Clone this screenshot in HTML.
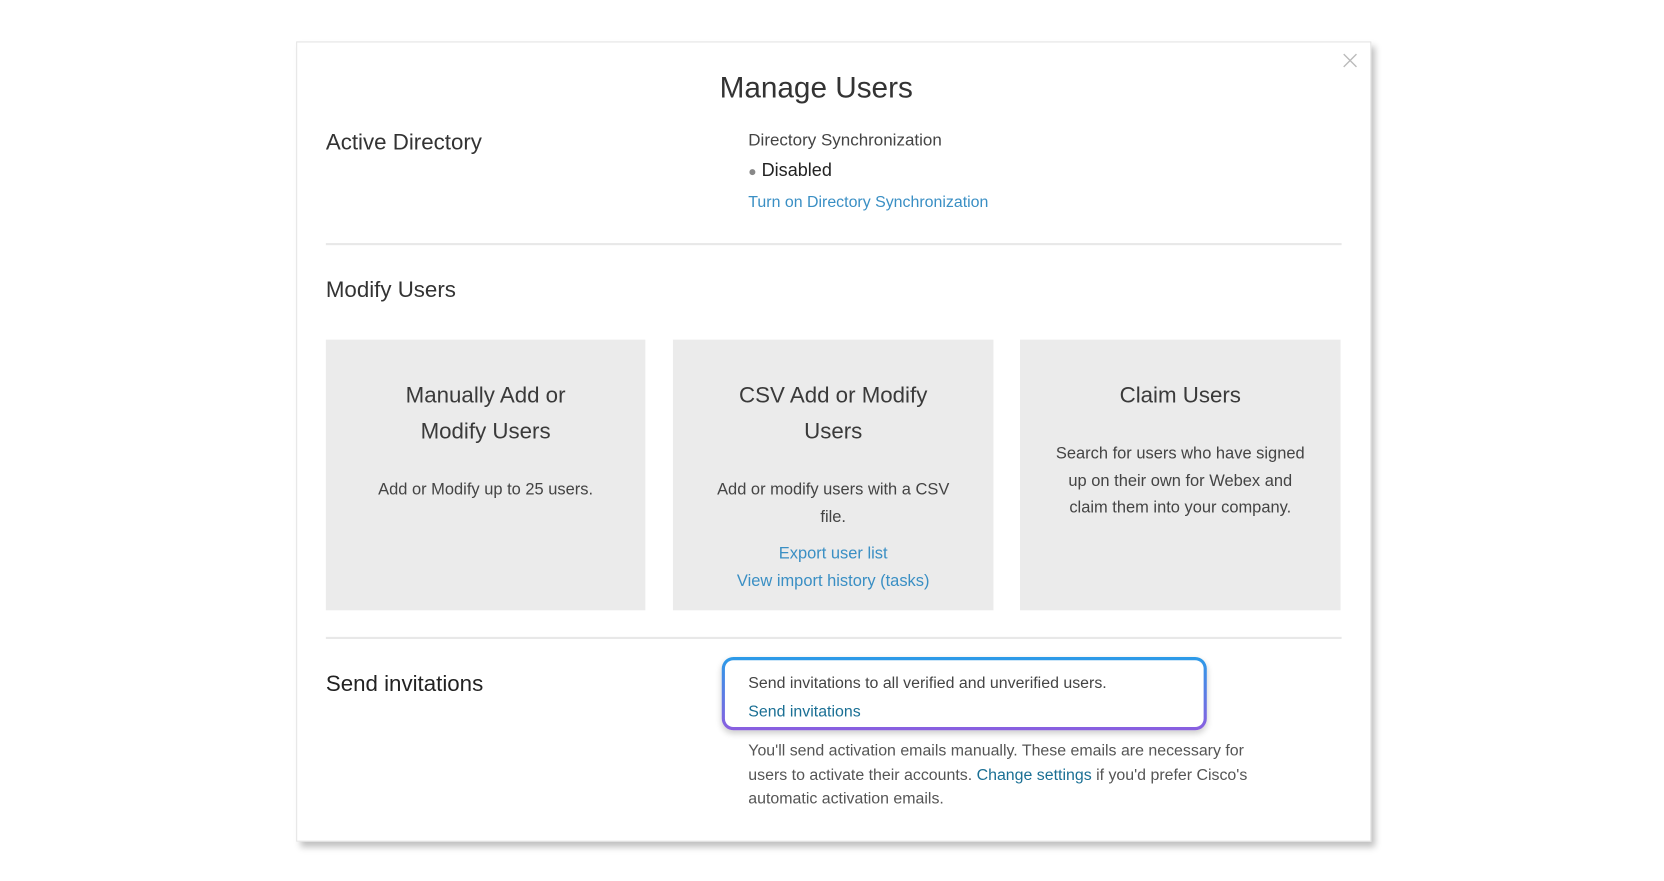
<!DOCTYPE html>
<html><head><meta charset="utf-8"><style>
html,body{margin:0;padding:0;background:#fff;width:1664px;height:880px;overflow:hidden}
#w{position:absolute;left:0;top:0;width:1570px;height:830px;transform:scale(1.0614);transform-origin:0 0;font-family:"Liberation Sans",sans-serif;color:#333}
.a{position:absolute;white-space:nowrap}
.card{position:absolute;left:279px;top:39px;width:1011px;height:752px;background:#fff;border:1px solid #e4e4e4;box-shadow:4px 5px 6px rgba(0,0,0,.25)}
.tile{position:absolute;top:320px;height:255px;background:#ebebeb;text-align:center}
.tt{font-size:21px;line-height:34px;color:#3a3a3a;margin-top:36px}
.td{font-size:15.5px;line-height:25.5px;color:#444;margin-top:25px}
.lk{color:#3a8fc4}
.box{position:absolute;left:680px;top:619px;width:457px;height:69px;border-radius:11px;padding:3px;box-sizing:border-box;background:linear-gradient(#2b9be8,#8a5ee0);box-shadow:0 3px 6px rgba(0,0,0,.2)}
.box>div{background:#fff;border-radius:8px;width:100%;height:100%}
</style></head><body><div id="w">
<div class="card"></div>
<svg class="a" style="left:1265px;top:50px" width="14" height="14"><path d="M1 1L13 13M13 1L1 13" stroke="#bbb" stroke-width="1.3"/></svg>
<div class="a" style="left:0;width:1538px;text-align:center;top:67px;font-size:28px;color:#333">Manage Users</div>
<div class="a" style="left:307px;top:123px;font-size:21px">Active Directory</div>
<div class="a" style="left:705px;top:124px;font-size:16px;color:#444">Directory Synchronization</div>
<div class="a" style="left:705px;top:151px;font-size:17px;color:#222"><span style="color:#888;font-size:13px">●</span> Disabled</div>
<div class="a lk" style="left:705px;top:182px;font-size:15px">Turn on Directory Synchronization</div>
<div class="a" style="left:307px;top:229px;width:957px;height:2px;background:#e8e8e8"></div>
<div class="a" style="left:307px;top:262px;font-size:21px">Modify Users</div>
<div class="tile" style="left:307px;width:301px"><div class="tt">Manually Add or<br>Modify Users</div><div class="td">Add or Modify up to 25 users.</div></div>
<div class="tile" style="left:634px;width:302px"><div class="tt">CSV Add or Modify<br>Users</div><div class="td">Add or modify users with a CSV<br>file.</div><div class="td lk" style="margin-top:9px">Export user list<br>View import history (tasks)</div></div>
<div class="tile" style="left:961px;width:302px"><div class="tt">Claim Users</div><div class="td" style="margin-top:25px">Search for users who have signed<br>up on their own for Webex and<br>claim them into your company.</div></div>
<div class="a" style="left:307px;top:600px;width:957px;height:2px;background:#e8e8e8"></div>
<div class="a" style="left:307px;top:633px;font-size:21px;color:#222">Send invitations</div>
<div class="box"><div></div></div>
<div class="a" style="left:705px;top:635px;font-size:15px;color:#444">Send invitations to all verified and unverified users.</div>
<div class="a" style="left:705px;top:662px;font-size:15px;color:#1a6f94">Send invitations</div>
<div class="a" style="left:705px;top:697px;font-size:15px;line-height:22.5px;color:#555">You'll send activation emails manually. These emails are necessary for<br>users to activate their accounts. <span style="color:#1a6f94">Change settings</span> if you'd prefer Cisco's<br>automatic activation emails.</div>
</div></body></html>
